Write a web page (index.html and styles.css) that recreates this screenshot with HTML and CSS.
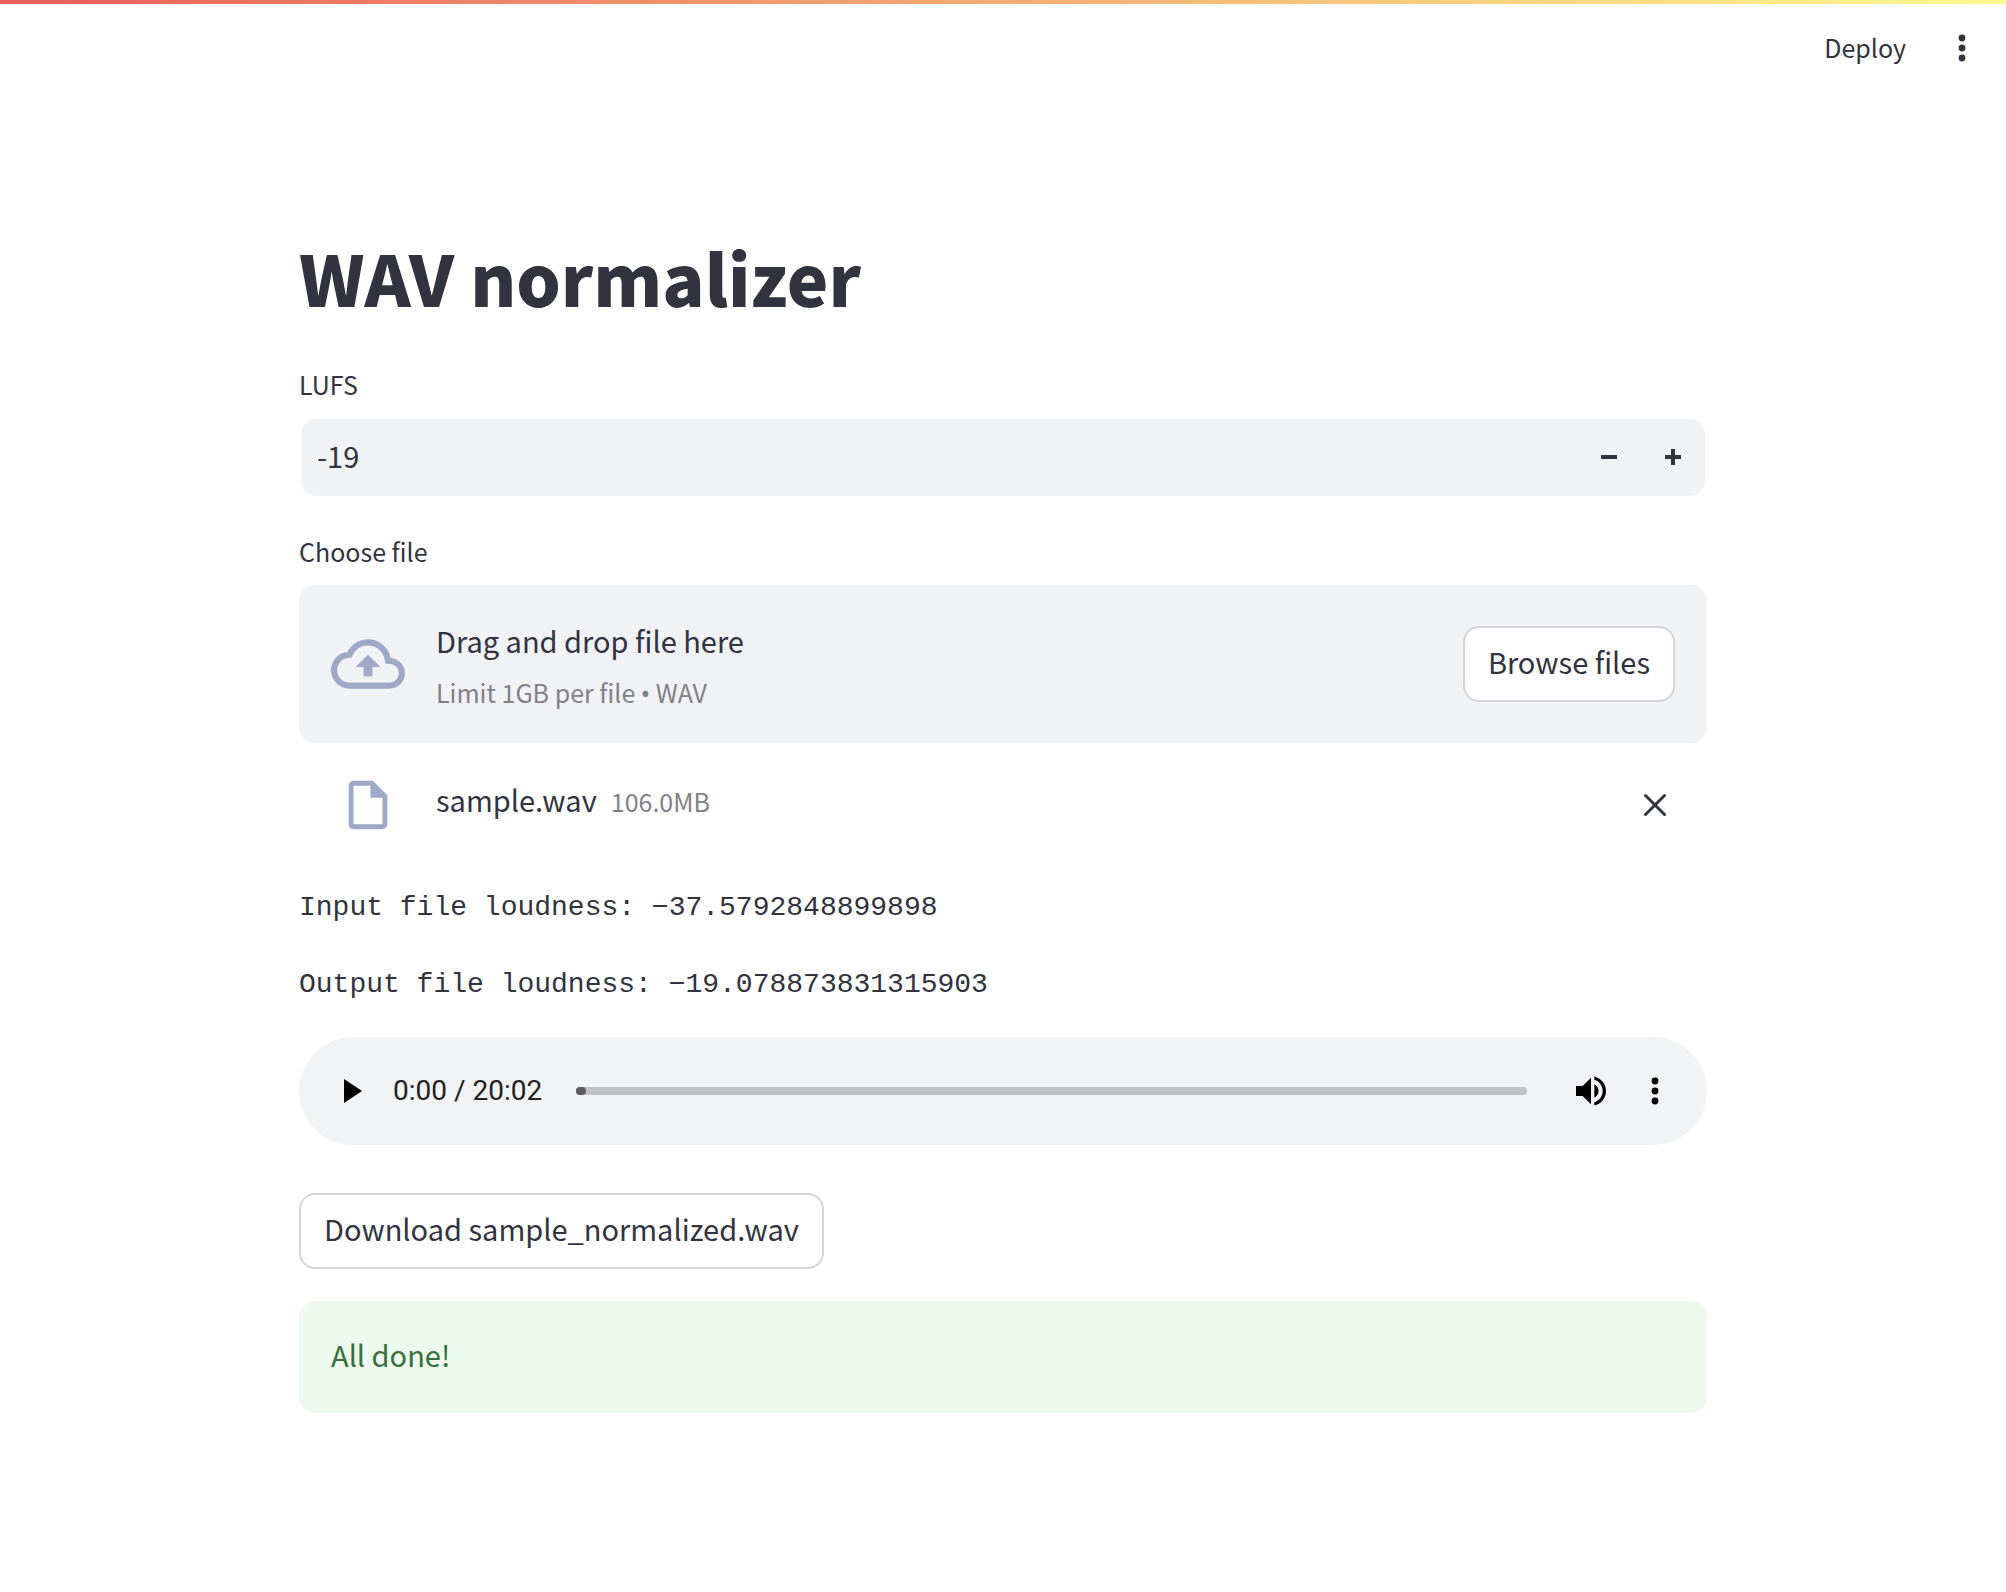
FILE: index.html
```html
<!DOCTYPE html>
<html lang="en">
<head>
<meta charset="utf-8">
<meta name="viewport" content="width=device-width, initial-scale=1">
<title>WAV normalizer</title>
<link rel="stylesheet" href="styles.css">
</head>
<body>
<header class="toolbar">
  <button class="plain deploy" type="button">Deploy</button>
  <button class="plain menu" type="button" aria-label="Main menu">
    <svg width="32" height="32" viewBox="0 0 32 32" fill="currentColor"><circle cx="16" cy="6" r="3.4"/><circle cx="16" cy="16" r="3.4"/><circle cx="16" cy="26" r="3.4"/></svg>
  </button>
</header>
<main class="content">
  <h1 class="title">WAV normalizer</h1>

  <label class="label" for="lufs">LUFS</label>
  <div class="number">
    <input class="number-input" id="lufs" type="number" value="-19">
    <button class="plain step" type="button" aria-label="Decrease">
      <svg width="16" height="16" viewBox="0 0 16 16" fill="currentColor"><path d="M0 6h16v4H0z"/></svg>
    </button>
    <button class="plain step" type="button" aria-label="Increase">
      <svg width="16" height="16" viewBox="0 0 16 16" fill="currentColor"><path d="M6 0h4v6h6v4h-6v6H6v-6H0V6h6z"/></svg>
    </button>
  </div>

  <label class="label" for="browse">Choose file</label>
  <section class="dropzone">
    <svg class="cloud" width="74" height="74" viewBox="0 0 24 24" fill="currentColor"><path d="M19.35 10.04A7.49 7.49 0 0 0 12 4C9.11 4 6.6 5.64 5.35 8.04A5.994 5.994 0 0 0 0 14c0 3.31 2.69 6 6 6h13c2.76 0 5-2.24 5-5 0-2.64-2.05-4.78-4.65-4.96zM19 18H6c-2.21 0-4-1.79-4-4 0-2.05 1.53-3.76 3.56-3.97l1.07-.11.5-.95A5.469 5.469 0 0 1 12 6c2.62 0 4.88 1.86 5.39 4.43l.3 1.5 1.53.11A2.98 2.98 0 0 1 22 15c0 1.65-1.35 3-3 3zM8 13h2.55v3h2.9v-3H16l-4-4z"/></svg>
    <div class="dropzone-text">
      <span class="body-text">Drag and drop file here</span>
      <span class="hint">Limit 1GB per file <span class="bullet">•</span> WAV</span>
    </div>
    <button class="button" id="browse" type="button">Browse files</button>
  </section>
  <div class="file">
    <svg class="file-icon" width="58" height="58" viewBox="0 0 24 24" fill="currentColor"><path d="M14 2H6c-1.1 0-1.99.9-1.99 2L4 20c0 1.1.89 2 1.99 2H18c1.1 0 2-.9 2-2V8l-6-6zM6 20V4h7v5h5v11H6z"/></svg>
    <div class="file-text">
      <span class="body-text">sample.wav</span>
      <span class="hint">106.0MB</span>
    </div>
    <button class="plain remove" type="button" aria-label="Remove file">
      <svg width="24" height="24" viewBox="0 0 24 24" fill="none" stroke="currentColor" stroke-width="3" stroke-linecap="round"><path d="M2.5 2.5l19 19M21.5 2.5l-19 19"/></svg>
    </button>
  </div>

  <p class="mono">Input file loudness: −37.5792848899898</p>
  <p class="mono">Output file loudness: −19.078873831315903</p>

  <div class="player">
    <button class="plain play" type="button" aria-label="Play">
      <svg width="18" height="24" viewBox="0 0 18 24" fill="currentColor"><path d="M0 0l18 12L0 24z"/></svg>
    </button>
    <span class="time">0:00 / 20:02</span>
    <input class="seek" type="range" min="0" max="1202" value="0" aria-label="Seek">
    <button class="plain volume" type="button" aria-label="Mute">
      <svg width="40" height="40" viewBox="0 0 24 24" fill="currentColor"><path d="M3 9v6h4l5 5V4L7 9H3zm13.5 3A4.5 4.5 0 0 0 14 7.97v8.05c1.48-.73 2.5-2.25 2.5-4.02zM14 3.23v2.06c2.89.86 5 3.54 5 6.71s-2.11 5.85-5 6.71v2.06c4.01-.91 7-4.49 7-8.77s-2.99-7.86-7-8.77z"/></svg>
    </button>
    <button class="plain more" type="button" aria-label="More options">
      <svg width="32" height="32" viewBox="0 0 32 32" fill="currentColor"><circle cx="16" cy="6" r="3.4"/><circle cx="16" cy="16" r="3.4"/><circle cx="16" cy="26" r="3.4"/></svg>
    </button>
  </div>

  <button class="button download" type="button">Download sample_normalized.wav</button>
  <div class="alert" role="status">All done!</div>
</main>
</body>
</html>
```
FILE: styles.css
```css
* { box-sizing: border-box; }

body {
  margin: 0;
  background: #fff;
  color: #31333f;
  font-family: "Noto Sans CJK SC", "Noto Sans", sans-serif;
  font-size: 29px;
  line-height: 40px;
}

svg { display: block; flex: none; }

button, input { font: inherit; color: inherit; margin: 0; }

.plain {
  display: flex;
  align-items: center;
  justify-content: center;
  padding: 0;
  border: 0;
  background: none;
}

.toolbar {
  display: flex;
  align-items: center;
  justify-content: flex-end;
  gap: 40px;
  height: 96px;
  padding-right: 28px;
  background: linear-gradient(90deg, #ea5e5b, #fbfa8c) top / 100% 4px no-repeat;
}

.deploy { padding-bottom: 2px; font-size: 25px; }

.content {
  max-width: 1472px;
  margin: 0 auto;
  padding: 132px 32px 96px;
}

.title {
  margin: 0 0 44px;
  padding-top: 2px;
  font-size: 70px;
  line-height: 94px;
  font-weight: 900;
}

.label {
  display: block;
  margin-bottom: 18px;
  font-size: 25px;
  line-height: 32px;
}

.number {
  display: flex;
  height: 79px;
  margin-bottom: 38px;
  border: solid #fff;
  border-width: 1px 2px;
  border-radius: 16px;
  background: #f0f2f6;
  background-clip: padding-box;
}

.number-input {
  flex: 1;
  min-width: 0;
  padding: 0 16px 6px;
  border: 0;
  background: none;
  appearance: textfield;
}

.number-input::-webkit-inner-spin-button { display: none; }

.step { width: 64px; padding-bottom: 2px; }

.dropzone {
  display: flex;
  align-items: center;
  height: 158px;
  padding: 0 32px;
  border-radius: 16px;
  background: #f0f2f6;
}

.cloud { margin-right: 31px; color: #9ea9c6; }

.dropzone-text {
  display: flex;
  flex: 1;
  flex-direction: column;
  gap: 12px;
  padding-top: 4px;
}

.hint { color: #808187; font-size: 25px; }

.bullet { font-family: "Noto Sans", sans-serif; }

.button {
  height: 76px;
  padding: 0 23px 6px;
  border: 2px solid #d6d6d9;
  border-radius: 16px;
  background: #fff;
}

.file {
  display: flex;
  align-items: center;
  height: 64px;
  margin: 30px 0 49px;
  padding: 0 32px 0 40px;
}

.file-icon { margin-right: 39px; color: #9ea9c6; }

.file-text {
  display: flex;
  flex: 1;
  align-items: baseline;
  gap: 14px;
  padding-bottom: 10px;
}

.remove { width: 40px; height: 40px; }

.mono {
  margin: 0 0 33px;
  font-family: "Liberation Mono", monospace;
  font-size: 28px;
  line-height: 44px;
}

.player {
  display: flex;
  align-items: center;
  height: 108px;
  margin: -3px 0 48px;
  padding: 0 36px 0 45px;
  border-radius: 54px;
  background: #f1f3f4;
  color: #000;
}

.time {
  margin: 0 34px 0 31px;
  color: #202124;
  font-family: Roboto, sans-serif;
  font-size: 28px;
}

.seek {
  flex: 1;
  min-width: 0;
  height: 8px;
  border-radius: 4px;
  background: #c0c1c2;
  appearance: none;
}

.seek::-webkit-slider-thumb {
  width: 10px;
  height: 8px;
  border-radius: 4px;
  background: #5c5c5e;
  appearance: none;
}

.volume { margin: 0 28px 0 44px; }

.download { display: block; margin-bottom: 32px; }

.alert {
  padding: 33px 32px 39px;
  border-radius: 16px;
  background: #edf9ee;
  color: #35703c;
}
```
